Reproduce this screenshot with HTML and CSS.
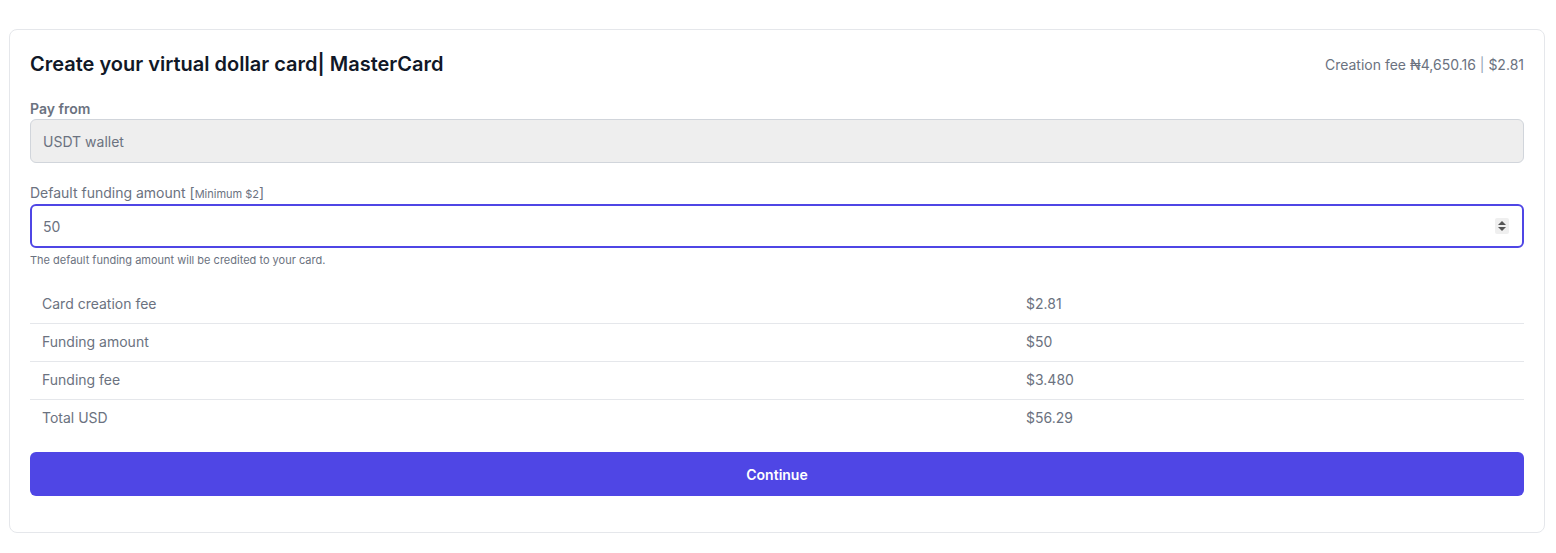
FILE: index.html
```html
<!DOCTYPE html>
<html lang="en">
<head>
<meta charset="utf-8">
<title>Create virtual card</title>
<link rel="stylesheet" href="styles.css">
</head>
<body>
<div class="page">
  <div class="card">
    <div class="header">
      <h1 class="title">Create your virtual dollar card<span class="bar">|</span> MasterCard</h1>
      <div class="fee">Creation fee ₦4,650.16 <span class="sep">|</span> $2.81</div>
    </div>

    <div class="field first">
      <label class="label-bold">Pay from</label>
      <div class="input disabled">USDT wallet</div>
    </div>

    <div class="field second">
      <label class="label">Default funding amount <span class="min">[<small>Minimum $2</small>]</span></label>
      <div class="input focus">
        <span>50</span>
        <span class="spin">
          <svg width="10" height="14" viewBox="0 0 10 14"><path d="M5 2 L9 6 H1 Z" fill="#555"/><path d="M5 12 L9 8 H1 Z" fill="#555"/></svg>
        </span>
      </div>
      <p class="help">The default funding amount will be credited to your card.</p>
    </div>

    <table class="summary">
      <tr><td class="k">Card creation fee</td><td>$2.81</td></tr>
      <tr><td class="k">Funding amount</td><td>$50</td></tr>
      <tr><td class="k">Funding fee</td><td>$3.480</td></tr>
      <tr><td class="k">Total USD</td><td>$56.29</td></tr>
    </table>

    <button class="btn">Continue</button>
  </div>
</div>
</body>
</html>
```

FILE: styles.css
```css
* { box-sizing: border-box; }
html, body { margin: 0; padding: 0; background: #fff; }
body { font-family: Inter, "Noto Sans", sans-serif; color: #6b7280; }
.page { padding: 29px 11px 0 9px; }
.card {
  border: 1px solid #e5e7eb;
  border-radius: 8px;
  padding: 20px 20px 36px 20px;
  background: #fff;
}
.header { display: flex; justify-content: space-between; align-items: center; height: 28px; }
.title { margin: 0; font-size: 20px; font-weight: 600; color: #111827; line-height: 28px; }
.bar { font-weight: 600; color: #111827; }
.fee { font-size: 14px; color: #6b7280; line-height: 20px; padding-top: 1px; }
.sep { color: #94a3b8; }
.field.first { margin-top: 21px; }
.field.second { margin-top: 20px; }
.label-bold { display: block; font-size: 14px; font-weight: 600; line-height: 20px; color: #6b7280; }
.label { display: block; font-size: 14px; line-height: 20px; color: #6b7280; }
.min { font-size: 14px; }
.min small { font-size: 11px; }
.input {
  height: 44px;
  margin-top: 0;
  border-radius: 6px;
  border: 1px solid #d1d5db;
  padding: 0 12px;
  font-size: 14px;
  color: #6b7280;
  display: flex;
  align-items: center;
  justify-content: space-between;
}
.input.disabled { background: #eeeeee; }
.input.focus { border: 2px solid #4f46e5; padding: 0 11px; }
.spin { display: flex; align-items: center; justify-content: center; width: 14px; height: 16px; background: #efefef; border-radius: 2px; margin-right: 2px; }
.help { margin: 5px 0 0; font-size: 11px; line-height: 14px; color: #6b7280; }
.summary { width: 100%; border-collapse: collapse; margin-top: 18px; font-size: 14px; color: #6b7280; }
.summary td { padding: 0 12px; height: 38px; line-height: 20px; }
.summary td.k { width: 984px; }
.summary tr + tr td { border-top: 1px solid #e5e7eb; }
.btn {
  display: block; width: 100%; height: 44px; margin-top: 15px;
  border: 0; border-radius: 6px; background: #4f46e5; color: #fff;
  font-family: Inter, "Noto Sans", sans-serif; font-size: 14px; font-weight: 600;
}
```
